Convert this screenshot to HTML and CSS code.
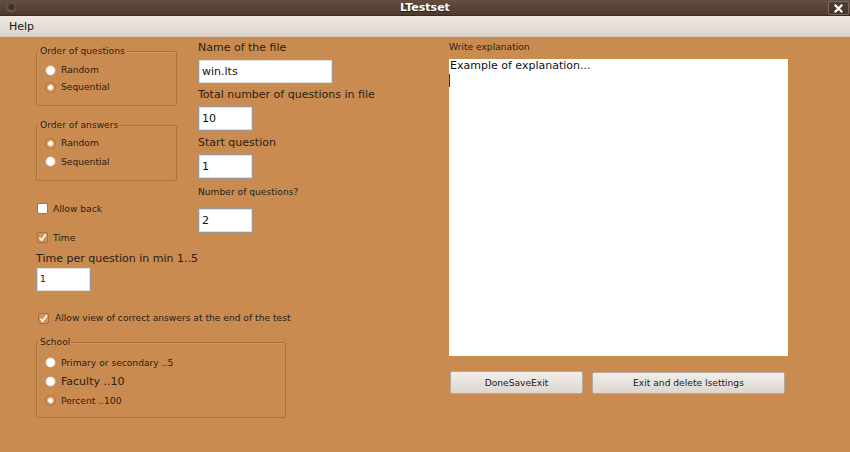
FILE: index.html
```html
<!DOCTYPE html>
<html>
<head>
<meta charset="utf-8">
<title>LTestset</title>
<link rel="stylesheet" href="styles.css">
</head>
<body>
<div class="window">
  <div class="titlebar">
    <div class="tb-left"><span class="menu-dot"></span></div>
    <div class="title">LTestset</div>
    <div class="tb-right">
      <span class="close"><svg width="9" height="9" viewBox="0 0 9 9"><path d="M1.5 1.5 L7.5 7.5 M7.5 1.5 L1.5 7.5" stroke="#fff" stroke-width="2.2" stroke-linecap="square"/></svg></span>
    </div>
  </div>
  <div class="menubar"><span class="menu-item">Help</span></div>
  <div class="main">
    <div class="settings">
      <div class="upper">
        <div class="col-order">
          <fieldset class="group group-questions">
            <legend>Order of questions</legend>
            <div class="opt"><span class="radio"></span>Random</div>
            <div class="opt"><span class="radio on"></span>Sequential</div>
          </fieldset>
          <fieldset class="group group-answers">
            <legend>Order of answers</legend>
            <div class="opt"><span class="radio on"></span>Random</div>
            <div class="opt"><span class="radio"></span>Sequential</div>
          </fieldset>
          <div class="check check-back"><span class="box"></span>Allow back</div>
          <div class="check check-time"><span class="box on"><svg width="9" height="9" viewBox="0 0 9 9"><path d="M1.5 4.8 L3.6 7.2 L7.8 1.2" fill="none" stroke="#fff" stroke-width="1.6"/></svg></span>Time</div>
        </div>
        <div class="col-file">
          <div class="label">Name of the file</div>
          <div class="field field-wide">win.lts</div>
          <div class="label">Total number of questions in file</div>
          <div class="field">10</div>
          <div class="label">Start question</div>
          <div class="field">1</div>
          <div class="label label-small">Number of questions?</div>
          <div class="field field-after-small">2</div>
        </div>
      </div>
      <div class="label time-label">Time per question in min 1..5</div>
      <div class="field field-time">1</div>
      <div class="check check-view"><span class="box on"><svg width="9" height="9" viewBox="0 0 9 9"><path d="M1.5 4.8 L3.6 7.2 L7.8 1.2" fill="none" stroke="#fff" stroke-width="1.6"/></svg></span>Allow view of correct answers at the end of the test</div>
      <fieldset class="group group-school">
        <legend>School</legend>
        <div class="opt"><span class="radio"></span>Primary or secondary ..5</div>
        <div class="opt opt-large"><span class="radio"></span>Faculty ..10</div>
        <div class="opt"><span class="radio on"></span>Percent ..100</div>
      </fieldset>
    </div>
    <div class="explain">
      <div class="small-label">Write explanation</div>
      <div class="textarea">
        <div class="text-line">Example of explanation...</div>
        <span class="caret"></span>
      </div>
      <div class="buttons">
        <span class="btn btn-done">DoneSaveExit</span>
        <span class="btn btn-exit">Exit and delete lsettings</span>
      </div>
    </div>
  </div>
</div>
</body>
</html>
```
FILE: styles.css
```css
* { box-sizing: border-box; }
body { margin: 0; font-family: "DejaVu Sans", "Noto Sans", sans-serif; }

.window {
  width: 850px;
  height: 452px;
  background: #c98b4f;
  overflow: hidden;
  display: flex;
  flex-direction: column;
}

/* title bar */
.titlebar {
  height: 16px;
  flex: none;
  border-bottom: 1px solid #3a2b22;
  background: linear-gradient(#654d3f, #4d3a2f);
  display: grid;
  grid-template-columns: 1fr auto 1fr;
  align-items: start;
}
.tb-left { padding: 3px 0 0 7px; }
.menu-dot {
  display: block;
  width: 9px;
  height: 9px;
  border-radius: 50%;
  background: radial-gradient(circle at 50% 45%, #3f322a 0 40%, #7d7068 75%, #a09289 100%);
}
.title {
  color: #fff;
  font-weight: bold;
  font-size: 11px;
  line-height: 15px;
  text-shadow: 0 1px 1px #221811;
}
.tb-right { display: flex; justify-content: flex-end; padding-right: 1px; }
.close {
  width: 21px;
  height: 14px;
  margin-top: 1px;
  border: 1px solid #7a695e;
  border-radius: 2px;
  background: linear-gradient(#4f3e34, #433429);
  display: flex;
  align-items: center;
  justify-content: center;
}

/* menu bar */
.menubar {
  height: 21px;
  flex: none;
  border-bottom: 1px solid #d2c7bb;
  background: linear-gradient(#eee9e3, #ddd5cc);
  display: flex;
  align-items: center;
  padding-left: 9px;
  font-size: 11px;
  color: #1d1915;
}

/* main area */
.main {
  flex: 1;
  display: flex;
  padding-left: 36px;
  color: #2b2117;
}
.settings { width: 413px; }
.upper { display: flex; }
.col-order { width: 162px; }
.col-file { flex: 1; }

/* groups */
.group {
  margin: 0;
  padding: 0 0 0 8px;
  min-width: 0;
  border: 1px solid #a97340;
  border-radius: 2px;
  box-shadow: inset 1px 1px 0 rgba(230, 170, 110, 0.35);
}
.group legend {
  font-size: 9.15px;
  line-height: 11px;
  padding: 0 1px;
  margin-left: -6px;
}
.group-questions { width: 141px; margin-top: 9px; padding-top: 4.5px; padding-bottom: 9.5px; }
.group-questions .opt { height: 17px; }
.group-answers { width: 141px; margin-top: 14px; padding-top: 3px; padding-bottom: 8.5px; }
.group-answers .opt { height: 18.5px; }
.group-school { width: 250px; margin-top: 12px; padding-top: 5px; padding-bottom: 6.5px; }
.group-school .opt { height: 19px; }

.opt {
  display: flex;
  align-items: center;
  font-size: 9.15px;
}
.opt-large { font-size: 11px; }

.radio {
  width: 11px;
  height: 11px;
  flex: none;
  margin-right: 5px;
  border-radius: 50%;
  background: #fff;
  border: 1px solid #c4996d;
}
.radio.on {
  border-color: #a9723f;
  background: radial-gradient(circle, #fff 0 1.7px, #f6dcc2 2.3px, #d6985c 3.3px);
}

/* check boxes */
.check {
  display: flex;
  align-items: center;
  height: 14px;
  font-size: 9.15px;
  margin-left: 1px;
}
.box {
  width: 11px;
  height: 11px;
  flex: none;
  margin-right: 5px;
  border: 1px solid #a67140;
  border-radius: 2px;
  background: #fff;
  display: flex;
  align-items: center;
  justify-content: center;
}
.box.on { background: #d2945a; }
.check-back { margin-top: 21px; }
.check-time { margin-top: 15px; }
.check-view { margin-top: 19px; margin-left: 2px; }
.check-view .box { margin-right: 6px; }

/* labels and fields */
.label {
  font-size: 11px;
  line-height: 14px;
  margin-top: 4.5px;
  white-space: nowrap;
}
.col-file .label:first-child { margin-top: 3.5px; }
.label-small { font-size: 9.15px; line-height: 12px; margin-top: 7.5px; }
.time-label { margin-top: 7.5px; }

.field {
  width: 55px;
  height: 25px;
  margin-top: 4px;
  padding-left: 3px;
  background: #fff;
  border: 1px solid #9e9891;
  box-shadow: inset 0 0 0 1px #e2ded9;
  font-size: 11px;
  line-height: 23px;
  color: #111;
}
.field-wide { width: 135px; }
.field-after-small { margin-top: 9.5px; }
.field-time { margin-top: 1px; font-size: 9.15px; }

/* explanation */
.explain { width: 339px; }
.small-label {
  font-size: 9.15px;
  line-height: 12px;
  margin-top: 4px;
}
.textarea {
  height: 297px;
  margin-top: 6px;
  background: #fff;
  padding-left: 1px;
  font-size: 11px;
  color: #111;
}
.text-line { line-height: 14px; }
.caret {
  display: block;
  width: 1px;
  height: 13px;
  margin-top: 1px;
  margin-left: -1px;
  background: #333;
}
.buttons {
  display: flex;
  gap: 9px;
  margin-top: 15px;
  padding-left: 1px;
}
.btn {
  height: 23px;
  display: flex;
  align-items: center;
  justify-content: center;
  font-size: 9.15px;
  color: #1e1a16;
  border: 1px solid #b5aa9f;
  border-radius: 2px;
  background: linear-gradient(#f1eeeb, #ddd6cf);
}
.btn-done { width: 133px; }
.btn-exit { width: 193px; height: 22px; margin-top: 1px; }
```
